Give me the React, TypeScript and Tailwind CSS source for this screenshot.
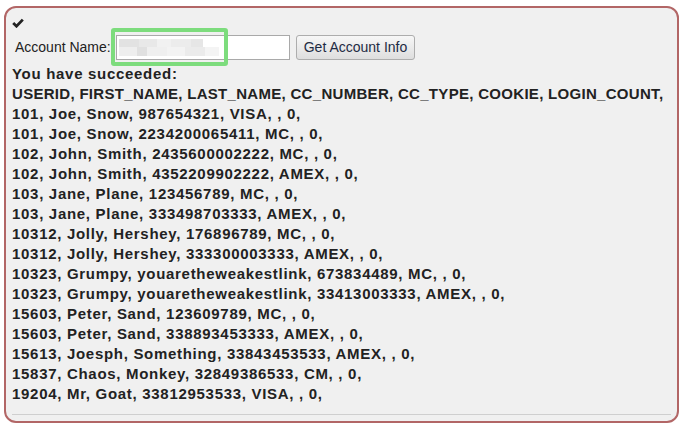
import React from "react";

const header = "USERID, FIRST_NAME, LAST_NAME, CC_NUMBER, CC_TYPE, COOKIE, LOGIN_COUNT,";

const rows = [
  "101, Joe, Snow, 987654321, VISA, , 0,",
  "101, Joe, Snow, 2234200065411, MC, , 0,",
  "102, John, Smith, 2435600002222, MC, , 0,",
  "102, John, Smith, 4352209902222, AMEX, , 0,",
  "103, Jane, Plane, 123456789, MC, , 0,",
  "103, Jane, Plane, 333498703333, AMEX, , 0,",
  "10312, Jolly, Hershey, 176896789, MC, , 0,",
  "10312, Jolly, Hershey, 333300003333, AMEX, , 0,",
  "10323, Grumpy, youaretheweakestlink, 673834489, MC, , 0,",
  "10323, Grumpy, youaretheweakestlink, 33413003333, AMEX, , 0,",
  "15603, Peter, Sand, 123609789, MC, , 0,",
  "15603, Peter, Sand, 338893453333, AMEX, , 0,",
  "15613, Joesph, Something, 33843453533, AMEX, , 0,",
  "15837, Chaos, Monkey, 32849386533, CM, , 0,",
  "19204, Mr, Goat, 33812953533, VISA, , 0,",
];

export default function App() {
  return (
    <main className="min-h-screen bg-white pt-[6px] pl-[4px] font-['Liberation_Sans',Arial,sans-serif] text-[#222]">
      <div className="w-[675px] h-[417px] border-2 border-[#b26666] rounded-[12px] bg-[#f0f0f0] px-[6px] pt-[6px] flex flex-col">
        <div className="h-[14px] flex items-end">
          <svg width="12" height="10" viewBox="0 0 12 10">
            <path d="M1.2 5 L4.5 8.2 L10.8 1.6" fill="none" stroke="#222" strokeWidth="2.8" strokeLinejoin="miter" />
          </svg>
        </div>

        <div className="relative flex items-center h-[25px] mt-[7px]">
          <span className="w-[104px] shrink-0 pl-[3px] text-[14px] whitespace-nowrap">Account Name:</span>
          <div className="relative w-[174px] h-[25px] bg-white border border-[#a9a9a9]">
            <div className="absolute left-[2px] top-[3px] flex">
              <div className="w-[20px] h-[8px] bg-[#e2e2e2]" />
              <div className="w-[18px] h-[8px] bg-[#e8e8e8]" />
              <div className="w-[14px] h-[8px] bg-[#f1f1f1]" />
              <div className="w-[20px] h-[8px] bg-[#ececec]" />
              <div className="w-[12px] h-[8px] bg-[#e6e6e6]" />
            </div>
            <div className="absolute left-[2px] top-[11px] flex">
              <div className="w-[18px] h-[9px] bg-[#eeeeee]" />
              <div className="w-[10px] h-[9px] bg-[#e0e0e0]" />
              <div className="w-[20px] h-[9px] bg-[#efefef]" />
              <div className="w-[18px] h-[9px] bg-[#f3f3f3]" />
              <div className="w-[20px] h-[9px] bg-[#ebebeb]" />
              <div className="w-[14px] h-[9px] bg-[#f4f4f4]" />
            </div>
          </div>
          <button className="ml-[6px] h-[25px] w-[119px] border border-[#adadad] rounded-[3px] bg-gradient-to-b from-[#f7f7f7] to-[#dedede] text-[14px] text-[#1e2b44] whitespace-nowrap">
            Get Account Info
          </button>
          <div className="absolute left-[99px] top-[-7px] w-[117px] h-[38px] border-4 border-[#7ddc7d] rounded-[3px]" />
        </div>

        <div className="mt-[4px] text-[15px] leading-[20px] font-bold tracking-[0.7px]">
          <div>You have succeeded:</div>
          <div className="whitespace-pre tracking-[0.3px]">{header}</div>
          {rows.map((r, i) => (
            <div key={i} className="whitespace-pre">{r}</div>
          ))}
        </div>

        <div className="mt-[10px] border-t border-[#cfcfcf]" />
      </div>
    </main>
  );
}
